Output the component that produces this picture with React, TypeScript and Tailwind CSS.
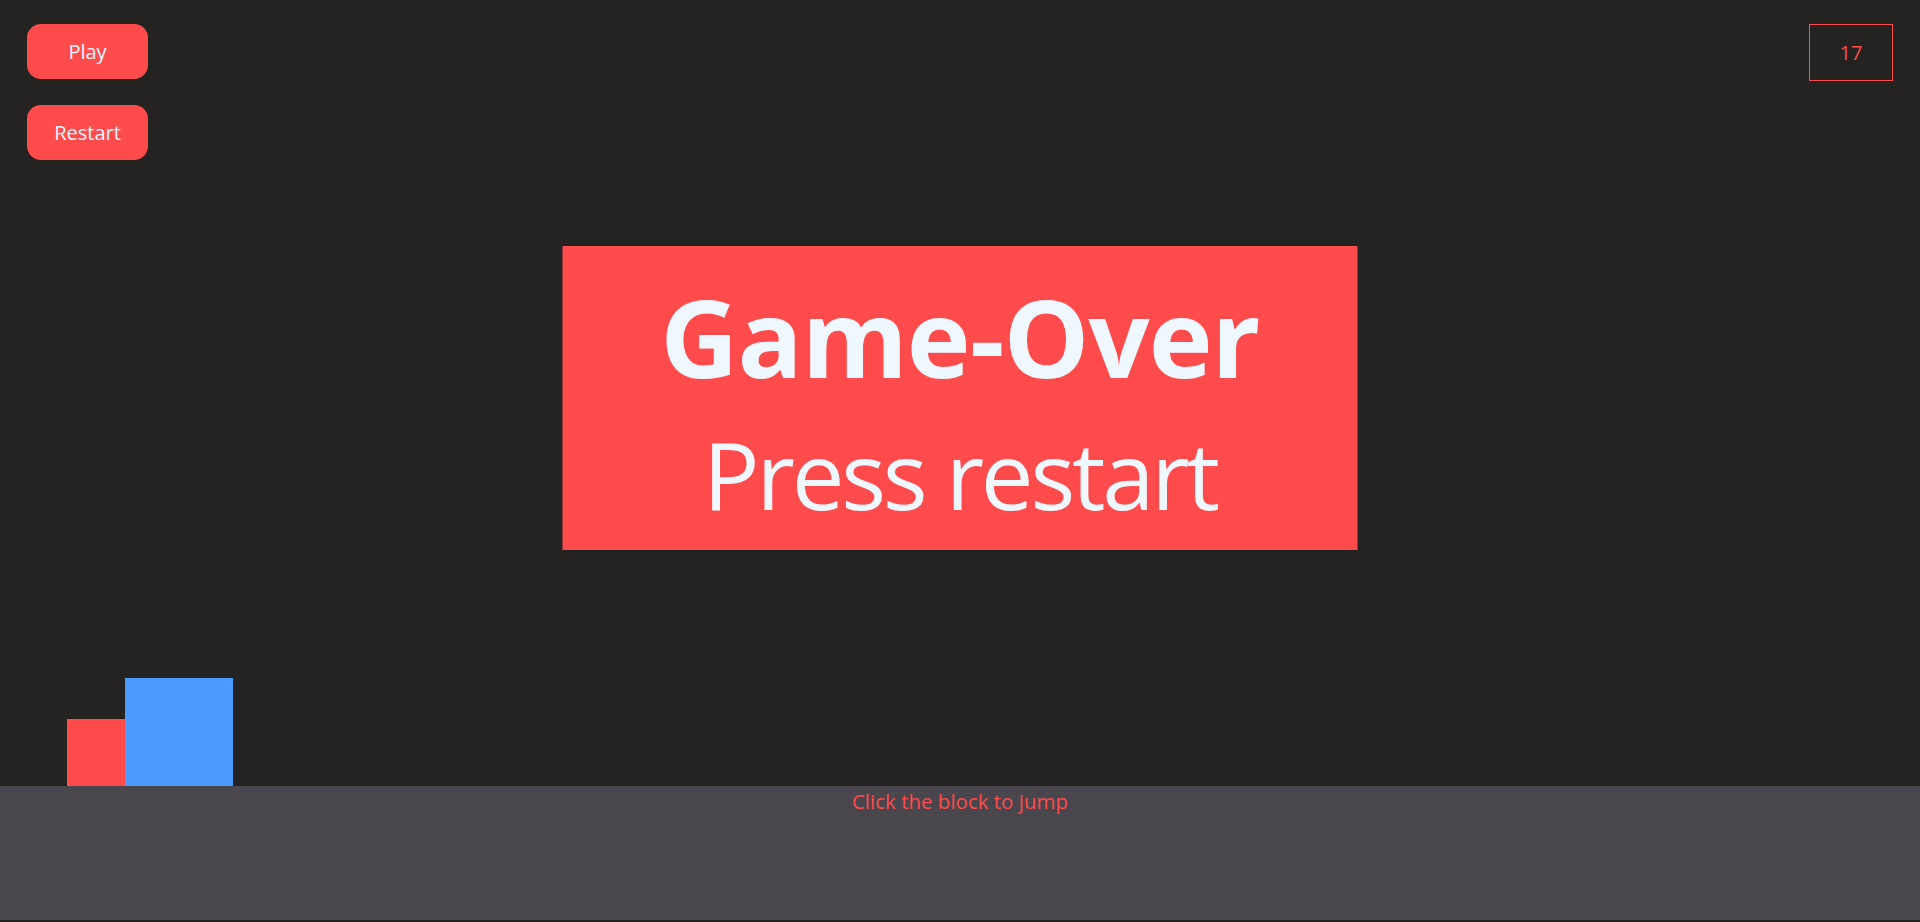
export default function App() {
  return (
    <div className="h-[922px] w-full bg-[#252321] flex flex-col font-['Open_Sans','Noto_Sans',sans-serif] overflow-hidden">
      {/* Game area */}
      <div className="relative flex-1">
        <div className="flex justify-between items-start px-[27px] pt-[24px]">
          <div className="flex flex-col gap-[26px]">
            <button className="w-[121px] h-[55px] rounded-[14px] bg-[#ff4b4b] text-[20px] text-[#f0f8ff]">Play</button>
            <button className="w-[121px] h-[55px] rounded-[14px] bg-[#ff4b4b] text-[20px] text-[#f0f8ff]">Restart</button>
          </div>
          <div className="w-[84px] h-[57px] border border-[#ff4b4b] text-[#ff4b4b] text-[20px] flex items-center justify-center">
            17
          </div>
        </div>

        {/* Game over popup */}
        <div className="absolute left-1/2 top-[246px] -translate-x-1/2 w-[795px] h-[304px] bg-[#ff4b4b] flex flex-col items-center pt-[37px] text-[#f0f8ff]">
          <div className="text-[108px] leading-none font-bold tracking-[-1px]">Game-Over</div>
          <div className="mt-[36px] text-[94px] leading-none tracking-[-3.2px]">Press restart</div>
        </div>

        {/* Player and obstacle */}
        <div className="absolute bottom-0 left-[67px] flex items-end">
          <div className="w-[58px] h-[67px] bg-[#ff4b4b]" />
          <div className="w-[108px] h-[108px] bg-[#4a9aff]" />
        </div>
      </div>

      {/* Ground */}
      <div className="h-[134px] bg-[#4a464d] text-center text-[20.5px] text-[#ff4b4b]">Click the block to jump</div>
      <div className="h-[2px] bg-[#252321]" />
    </div>
  )
}
